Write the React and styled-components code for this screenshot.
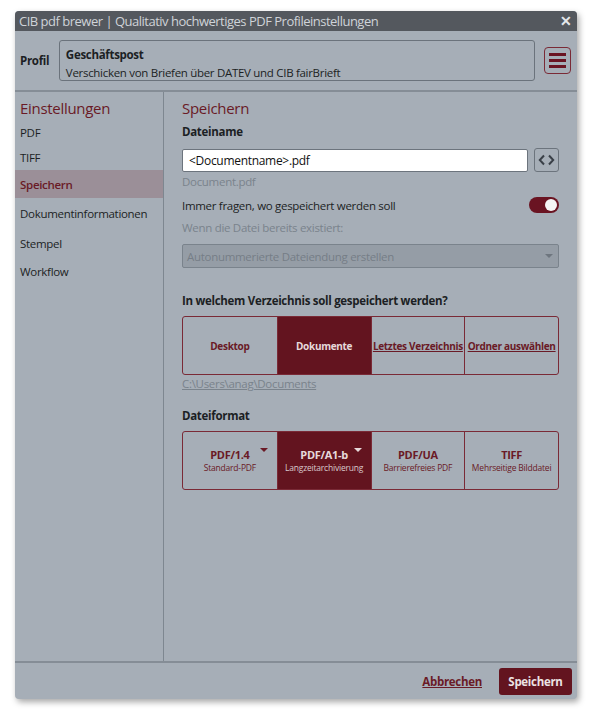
import React from "react";
import styled, { createGlobalStyle } from "styled-components";

const Global = createGlobalStyle`
  html, body { margin: 0; padding: 0; background: #ffffff; }
  body { font-family: "Open Sans", "Noto Sans", sans-serif; letter-spacing: -0.3px; }
  * { box-sizing: border-box; }
`;

const MAROON = "#63141f";
const BG = "#a6aeb7";

const Page = styled.div`
  padding: 11px 13px 19px 15px;
`;

const Window = styled.div`
  width: 562px;
  height: 688px;
  background: ${BG};
  border-radius: 4px;
  box-shadow: 2px 3px 6px rgba(0, 0, 0, 0.35);
  display: flex;
  flex-direction: column;
  overflow: hidden;
`;

const TitleBar = styled.div`
  height: 20px;
  flex: none;
  background: #54585e;
  color: #cfd3d8;
  font-size: 13px;
  letter-spacing: -0.5px;
  display: flex;
  align-items: center;
  justify-content: space-between;
  padding: 0 6px 0 4px;
`;

const Close = styled.span`
  color: #e4e7ea;
  font-size: 14px;
  font-weight: 700;
  line-height: 1;
`;

const ProfileBar = styled.div`
  height: 61px;
  flex: none;
  display: flex;
  align-items: center;
  padding: 0 6px 0 5px;
  border-bottom: 2px solid #858d96;
`;

const ProfileLabel = styled.div`
  font-size: 11.5px;
  font-weight: 700;
  color: #1c1f24;
  width: 39px;
`;

const ProfileBox = styled.div`
  width: 478px;
  height: 41px;
  border: 1px solid #6b737c;
  border-radius: 3px;
  padding: 6px 6px 0;
  display: flex;
  flex-direction: column;
  gap: 2px;
  font-size: 11.5px;
  color: #1c1f24;
  line-height: 16px;
`;

const Bold = styled.div`
  font-weight: 700;
`;

const MenuButton = styled.div`
  margin-left: 9px;
  width: 27px;
  height: 27px;
  border: 1px solid #7a2a36;
  border-radius: 4px;
  display: flex;
  flex-direction: column;
  justify-content: center;
  align-items: center;
  gap: 3px;
`;

const MenuLine = styled.span`
  width: 17px;
  height: 3px;
  background: #6a1422;
`;

const Main = styled.div`
  flex: 1;
  display: flex;
  min-height: 0;
`;

const Sidebar = styled.div`
  width: 149px;
  flex: none;
  border-right: 1px solid #7e8790;
  padding-top: 5px;
  display: flex;
  flex-direction: column;
`;

const SideTitle = styled.div`
  font-size: 15px;
  color: #6a1a26;
  padding: 0 5px;
  height: 22px;
  line-height: 22px;
`;

const SideItem = styled.div`
  font-size: 11.5px;
  color: ${(p) => (p.$active ? "#6a1a26" : "#1c1f24")};
  font-weight: ${(p) => (p.$active ? 600 : 400)};
  background: ${(p) => (p.$active ? "#9b8f98" : "transparent")};
  height: ${(p) => p.$h}px;
  display: flex;
  align-items: center;
  padding: 0 5px;
`;

const Content = styled.div`
  flex: 1;
  padding: 5px 18px 0 18px;
  display: flex;
  flex-direction: column;
`;

const Heading = styled.div`
  font-size: 15px;
  color: #6a1a26;
  height: 22px;
  line-height: 22px;
`;

const Label = styled.div`
  font-size: 11.5px;
  font-weight: 700;
  color: #1c1f24;
  margin-top: ${(p) => p.$mt || 0}px;
  height: 18px;
  line-height: 18px;
`;

const Row = styled.div`
  display: flex;
  align-items: center;
  gap: 6px;
  margin-top: ${(p) => p.$mt || 0}px;
`;

const Input = styled.div`
  flex: 1;
  height: 23px;
  background: #ffffff;
  border: 1px solid #6c747d;
  border-radius: 2px;
  font-size: 12px;
  color: #111;
  display: flex;
  align-items: center;
  padding: 0 6px;
`;

const CodeButton = styled.div`
  width: 25px;
  height: 24px;
  border: 1px solid #6c747d;
  border-radius: 3px;
  display: flex;
  align-items: center;
  justify-content: center;
`;

const Hint = styled.div`
  font-size: 11.5px;
  color: #7a838c;
  height: 18px;
  line-height: 18px;
  margin-top: ${(p) => p.$mt || 0}px;
`;

const ToggleRow = styled.div`
  display: flex;
  align-items: center;
  justify-content: space-between;
  margin-top: 5px;
  height: 18px;
`;

const Text = styled.div`
  font-size: 11.5px;
  color: #1c1f24;
`;

const Toggle = styled.div`
  width: 30px;
  height: 16px;
  border-radius: 8px;
  background: #6a1422;
  display: flex;
  align-items: center;
  justify-content: flex-end;
  padding: 0 2px;
`;

const Knob = styled.span`
  width: 12px;
  height: 12px;
  border-radius: 50%;
  background: #f5f5f5;
`;

const Select = styled.div`
  margin-top: 7px;
  height: 24px;
  border: 1px solid #7a838c;
  border-radius: 2px;
  background: #959da6;
  font-size: 11.5px;
  color: #767e87;
  display: flex;
  align-items: center;
  justify-content: space-between;
  padding: 0 5px 0 4px;
`;

const Caret = styled.span`
  width: 0;
  height: 0;
  border-left: 4px solid transparent;
  border-right: 4px solid transparent;
  border-top: 4px solid ${(p) => p.$color || "#6e767f"};
`;

const Segments = styled.div`
  margin-top: ${(p) => p.$mt || 0}px;
  height: ${(p) => p.$h}px;
  display: grid;
  grid-template-columns: repeat(4, minmax(0, 1fr));
  border: 1px solid #7a2a36;
  border-radius: 3px;
  overflow: hidden;
`;

const Segment = styled.div`
  position: relative;
  background: ${(p) => (p.$active ? MAROON : "transparent")};
  color: ${(p) => (p.$active ? "#e6d9db" : "#6a1a26")};
  border-left: ${(p) => (p.$first ? "none" : "1px solid #7a2a36")};
  display: flex;
  flex-direction: column;
  align-items: center;
  justify-content: center;
  font-size: 10px;
  font-weight: 700;
  text-decoration: ${(p) => (p.$link ? "underline" : "none")};
  white-space: nowrap;
`;

const SegTitle = styled.div`
  font-size: 11px;
  font-weight: 700;
  line-height: 15px;
`;

const SegSub = styled.div`
  font-size: 8.5px;
  font-weight: 400;
  line-height: 12px;
  letter-spacing: -0.2px;
  color: ${(p) => (p.$active ? "#d8c9cc" : "#6a1a26")};
`;

const SegCaret = styled.span`
  position: absolute;
  right: 9px;
  top: 20px;
`;

const PathLink = styled.div`
  font-size: 11.5px;
  color: #7a838c;
  text-decoration: underline;
  height: 18px;
  line-height: 18px;
`;

const Footer = styled.div`
  height: 38px;
  flex: none;
  border-top: 2px solid #858d96;
  display: flex;
  align-items: center;
  justify-content: flex-end;
  gap: 17px;
  padding: 0 5px 0 0;
`;

const LinkButton = styled.div`
  font-size: 11.5px;
  font-weight: 700;
  color: #6a1a26;
  text-decoration: underline;
`;

const PrimaryButton = styled.div`
  width: 73px;
  height: 27px;
  background: ${MAROON};
  color: #ece3e4;
  border-radius: 3px;
  font-size: 11.5px;
  font-weight: 700;
  display: flex;
  align-items: center;
  justify-content: center;
`;

const nav = [
  { label: "PDF", h: 26 },
  { label: "TIFF", h: 25 },
  { label: "Speichern", h: 28, active: true },
  { label: "Dokumentinformationen", h: 31 },
  { label: "Stempel", h: 28 },
  { label: "Workflow", h: 29 },
];

const formats = [
  { t: "PDF/1.4", s: "Standard-PDF", caret: true },
  { t: "PDF/A1-b", s: "Langzeitarchivierung", caret: true, active: true },
  { t: "PDF/UA", s: "Barrierefreies PDF" },
  { t: "TIFF", s: "Mehrseitige Bilddatei" },
];

export default function App() {
  return (
    <>
      <Global />
      <Page>
        <Window>
          <TitleBar>
            <span>CIB pdf brewer | Qualitativ hochwertiges PDF Profileinstellungen</span>
            <Close>✕</Close>
          </TitleBar>
          <ProfileBar>
            <ProfileLabel>Profil</ProfileLabel>
            <ProfileBox>
              <Bold>Geschäftspost</Bold>
              <div>Verschicken von Briefen über DATEV und CIB fairBrieft</div>
            </ProfileBox>
            <MenuButton>
              <MenuLine />
              <MenuLine />
              <MenuLine />
            </MenuButton>
          </ProfileBar>
          <Main>
            <Sidebar>
              <SideTitle>Einstellungen</SideTitle>
              {nav.map((n) => (
                <SideItem key={n.label} $h={n.h} $active={n.active}>
                  {n.label}
                </SideItem>
              ))}
            </Sidebar>
            <Content>
              <Heading>Speichern</Heading>
              <Label $mt={4}>Dateiname</Label>
              <Row $mt={7}>
                <Input>&lt;Documentname&gt;.pdf</Input>
                <CodeButton>
                  <svg width="17" height="12" viewBox="0 0 17 12">
                    <path d="M6 1.5 L1.8 6 L6 10.5" fill="none" stroke="#3a4048" strokeWidth="2" />
                    <path d="M11 1.5 L15.2 6 L11 10.5" fill="none" stroke="#3a4048" strokeWidth="2" />
                  </svg>
                </CodeButton>
              </Row>
              <Hint $mt={1}>Document.pdf</Hint>
              <ToggleRow>
                <Text>Immer fragen, wo gespeichert werden soll</Text>
                <Toggle>
                  <Knob />
                </Toggle>
              </ToggleRow>
              <Hint $mt={5}>Wenn die Datei bereits existiert:</Hint>
              <Select>
                <span>Autonummerierte Dateiendung erstellen</span>
                <Caret />
              </Select>
              <Label $mt={24}>In welchem Verzeichnis soll gespeichert werden?</Label>
              <Segments $mt={6} $h={59}>
                <Segment $first>Desktop</Segment>
                <Segment $active>Dokumente</Segment>
                <Segment $link>Letztes Verzeichnis</Segment>
                <Segment $link>Ordner auswählen</Segment>
              </Segments>
              <PathLink>C:\Users\anag\Documents</PathLink>
              <Label $mt={14}>Dateiformat</Label>
              <Segments $mt={6} $h={59}>
                {formats.map((f, i) => (
                  <Segment key={f.t} $first={i === 0} $active={f.active}>
                    <SegTitle>{f.t}</SegTitle>
                    <SegSub $active={f.active}>{f.s}</SegSub>
                    {f.caret && (
                      <SegCaret>
                        <Caret $color={f.active ? "#e6d9db" : "#6a1a26"} />
                      </SegCaret>
                    )}
                  </Segment>
                ))}
              </Segments>
            </Content>
          </Main>
          <Footer>
            <LinkButton>Abbrechen</LinkButton>
            <PrimaryButton>Speichern</PrimaryButton>
          </Footer>
        </Window>
      </Page>
    </>
  );
}
